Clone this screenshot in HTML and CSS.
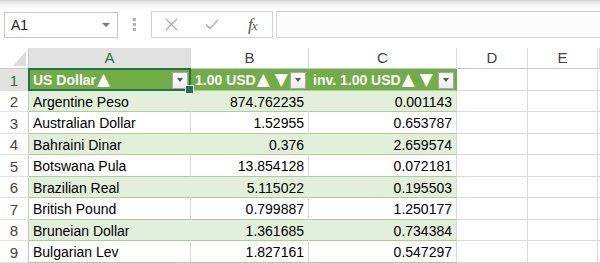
FILE: index.html
```html
<!DOCTYPE html>
<html lang="en">
<head>
  <meta charset="UTF-8">
  <title>Exchange rates</title>
  <link rel="stylesheet" href="styles.css">
</head>
<body>

<!-- formula bar -->
<div class="topbar">
  <div class="formula-bar">
    <div class="name-box"><span>A1</span><span class="nb-arrow"></span></div>
    <div class="grip">
      <svg width="3" height="13" viewBox="0 0 3 13"><rect x="0" y="0" width="3" height="3" fill="#b4b4b4"/><rect x="0" y="5" width="3" height="3" fill="#b4b4b4"/><rect x="0" y="10" width="3" height="3" fill="#b4b4b4"/></svg>
    </div>
    <div class="fx-buttons">
      <span class="fx-slot">
        <svg width="13" height="13" viewBox="0 0 13 13"><path d="M1 1 L12 12 M12 1 L1 12" stroke="#b0b0b0" stroke-width="1.3" fill="none"/></svg>
      </span>
      <span class="fx-slot wide">
        <svg width="14" height="11" viewBox="0 0 14 11"><path d="M1 5.5 L5 9.5 L13 1" stroke="#b8b8b8" stroke-width="1.8" fill="none"/></svg>
      </span>
      <span class="fx-slot"><span class="fx"><i>f</i><i class="fx-x">x</i></span></span>
    </div>
    <div class="formula-input"></div>
  </div>
</div>

<!-- sheet -->
<div class="sheet">
  <div class="row heads">
    <div class="corner"><span class="corner-tri"></span></div>
    <div class="ch sel">A</div>
    <div class="ch">B</div>
    <div class="ch">C</div>
    <div class="ch">D</div>
    <div class="ch">E</div>
    <div class="ch"></div>
  </div>

  <div class="row">
    <div class="rh sel">1</div>
    <div class="c th active"><span>US Dollar<span class="arr">▲</span></span><span class="filter"></span></div>
    <div class="c th"><span>1.00 USD<span class="arr">▲</span> <span class="arr">▼</span></span><span class="filter"></span></div>
    <div class="c th"><span>inv. 1.00 USD<span class="arr">▲</span> <span class="arr">▼</span></span><span class="filter"></span></div>
    <div class="c"></div>
    <div class="c"></div>
    <div class="c"></div>
  </div>

  <div class="row band">
    <div class="rh">2</div>
    <div class="c t">Argentine Peso</div>
    <div class="c t num">874.762235</div>
    <div class="c t num last">0.001143</div>
    <div class="c"></div>
    <div class="c"></div>
    <div class="c"></div>
  </div>

  <div class="row">
    <div class="rh">3</div>
    <div class="c t">Australian Dollar</div>
    <div class="c t num">1.52955</div>
    <div class="c t num last">0.653787</div>
    <div class="c"></div>
    <div class="c"></div>
    <div class="c"></div>
  </div>

  <div class="row band">
    <div class="rh">4</div>
    <div class="c t">Bahraini Dinar</div>
    <div class="c t num">0.376</div>
    <div class="c t num last">2.659574</div>
    <div class="c"></div>
    <div class="c"></div>
    <div class="c"></div>
  </div>

  <div class="row">
    <div class="rh">5</div>
    <div class="c t">Botswana Pula</div>
    <div class="c t num">13.854128</div>
    <div class="c t num last">0.072181</div>
    <div class="c"></div>
    <div class="c"></div>
    <div class="c"></div>
  </div>

  <div class="row band">
    <div class="rh">6</div>
    <div class="c t">Brazilian Real</div>
    <div class="c t num">5.115022</div>
    <div class="c t num last">0.195503</div>
    <div class="c"></div>
    <div class="c"></div>
    <div class="c"></div>
  </div>

  <div class="row">
    <div class="rh">7</div>
    <div class="c t">British Pound</div>
    <div class="c t num">0.799887</div>
    <div class="c t num last">1.250177</div>
    <div class="c"></div>
    <div class="c"></div>
    <div class="c"></div>
  </div>

  <div class="row band">
    <div class="rh">8</div>
    <div class="c t">Bruneian Dollar</div>
    <div class="c t num">1.361685</div>
    <div class="c t num last">0.734384</div>
    <div class="c"></div>
    <div class="c"></div>
    <div class="c"></div>
  </div>

  <div class="row">
    <div class="rh">9</div>
    <div class="c t">Bulgarian Lev</div>
    <div class="c t num">1.827161</div>
    <div class="c t num last">0.547297</div>
    <div class="c"></div>
    <div class="c"></div>
    <div class="c"></div>
  </div>
</div>

</body>
</html>
```

FILE: styles.css
```css
* {
  margin: 0;
  padding: 0;
  box-sizing: border-box;
}

body {
  width: 600px;
  height: 263px;
  overflow: hidden;
  background: #fff;
  color: #000;
  font-family: "Liberation Sans", Arial, sans-serif;
  font-size: 14px;
}

/* formula bar */
.topbar {
  height: 48px;
  padding-top: 11px;
  background: linear-gradient(#cdcdcd 0, #e9e9e9 2px, #f7f7f7 6px, #fff 10px);
}

.formula-bar {
  display: flex;
  height: 27px;
}

.name-box {
  width: 114px;
  height: 26px;
  margin: 1px 0 0 4px;
  padding: 0 7px 0 6px;
  display: flex;
  align-items: center;
  justify-content: space-between;
  background: #fff;
  border: 1px solid #c6c6c6;
  color: #222;
  font-size: 14px;
}

.nb-arrow {
  width: 0;
  height: 0;
  border-left: 4px solid transparent;
  border-right: 4px solid transparent;
  border-top: 4px solid #7a7a7a;
}

.grip {
  width: 33px;
  display: flex;
  align-items: center;
  justify-content: center;
}

.fx-buttons {
  width: 122px;
  display: flex;
  align-items: center;
  background: #fff;
  border: 1px solid #d0d0d0;
}

.fx-slot {
  width: 40px;
  display: flex;
  justify-content: center;
  align-items: center;
}
.fx-slot.wide {
  width: 42px;
}

.fx {
  font-family: "Liberation Serif", "Times New Roman", serif;
  font-size: 17px;
  color: #555;
  letter-spacing: -1px;
}
.fx-x {
  font-size: 13px;
}

.formula-input {
  flex: 1;
  margin-left: 3px;
  background: #fcfcfc;
  border: 1px solid #d4d4d4;
  border-right: none;
}

/* grid */
.row {
  display: grid;
  grid-template-columns: 29px 162px 118px 148px 71px 70px 1fr;
  height: 22px;
}
.row.heads {
  height: 21px;
}
.row.band {
  height: 21px;
}

.corner {
  border-right: 1px solid #c6c6c6;
  border-bottom: 1px solid #c6c6c6;
  display: flex;
  justify-content: flex-end;
  align-items: flex-end;
  padding: 0 2px 2px 0;
}
.corner-tri {
  width: 13px;
  height: 15px;
  background: #dcdcdc;
  clip-path: polygon(100% 0, 100% 100%, 0 100%);
}

.ch {
  border-right: 1px solid #dadada;
  border-bottom: 1px solid #c6c6c6;
  color: #444;
  font-size: 15px;
  line-height: 20px;
  text-align: center;
}

.rh {
  border-right: 1px solid #c6c6c6;
  border-bottom: 1px solid #e1e1e1;
  color: #444;
  font-size: 15px;
  display: flex;
  align-items: center;
  justify-content: center;
  padding-top: 1px;
}

.ch.sel,
.rh.sel {
  background: #e1e1e1;
  color: #217346;
}

.c {
  border-right: 1px solid #dadada;
  border-bottom: 1px solid #dadada;
  padding: 1px 4px 0 4px;
  display: flex;
  align-items: center;
  white-space: nowrap;
  overflow: hidden;
}

.num {
  justify-content: flex-end;
}

/* table */
.c.t {
  border-bottom-color: #a9d08e;
}

.band .c.t {
  background: #e2efda;
  border-right-color: #e2efda;
}
.band .c.t.last {
  border-right-color: #d4dccf;
}

.c.th {
  background: #70ad47;
  color: #fff;
  font-weight: bold;
  border-right-color: #70ad47;
  border-bottom-color: #a9d08e;
  padding-right: 2px;
  overflow: visible;
  line-height: 18px;
}

.arr {
  font-family: "DejaVu Sans", sans-serif;
  font-size: 17px;
  line-height: 1;
  margin-left: 1px;
}

.filter {
  width: 16px;
  height: 17px;
  margin-left: auto;
  display: flex;
  align-items: center;
  justify-content: center;
  background: linear-gradient(#fff, #ececec);
  border: 1px solid #a8a8a8;
}
.filter::after {
  content: "";
  width: 0;
  height: 0;
  border-left: 3.5px solid transparent;
  border-right: 3.5px solid transparent;
  border-top: 4px solid #555;
}

/* selected cell */
.active {
  position: relative;
}
.active::after {
  content: "";
  position: absolute;
  left: -1px;
  top: -1px;
  right: -1px;
  bottom: -1px;
  border: 2px solid #217346;
}
.active::before {
  content: "";
  position: absolute;
  right: -4px;
  bottom: -4px;
  width: 7px;
  height: 7px;
  background: #217346;
  border: 1px solid #fff;
  z-index: 2;
}
```
